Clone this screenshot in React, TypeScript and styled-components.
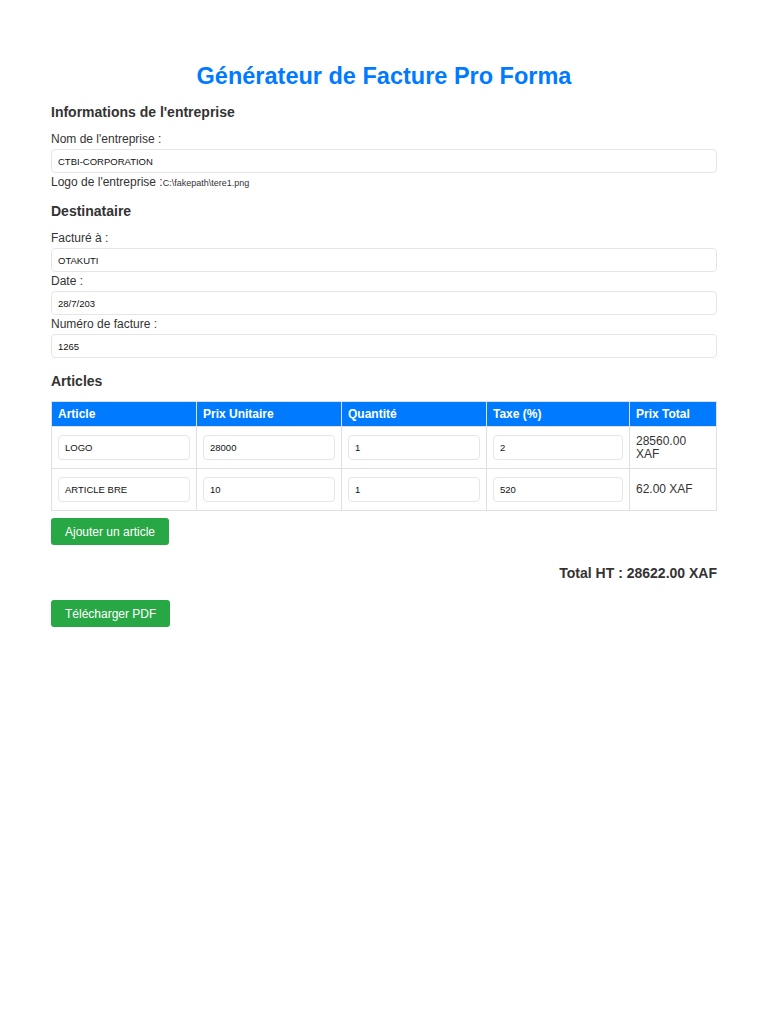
import React, { useState } from 'react'
import styled, { createGlobalStyle } from 'styled-components'

const GlobalStyle = createGlobalStyle`
    body {
        margin: 0;
        background: #fff;
        font-family: "Liberation Sans", Arial, sans-serif;
        color: #333;
    }
`

const Page = styled.div`
    width: 666px;
    margin: 0 auto;
    padding-top: 61px;
`

const Title = styled.h1`
    margin: 0 0 13px;
    text-align: center;
    color: #007bff;
    font-size: 23.5px;
    font-weight: bold;
    line-height: 30px;
`

const SectionTitle = styled.h3<{ $top?: number }>`
    margin: ${p => p.$top ?? 0}px 0 11px;
    font-size: 14px;
    font-weight: bold;
    color: #333;
    line-height: 17px;
`

const Section = styled.section`
    margin-bottom: 13px;
`

const Label = styled.label`
    display: block;
    font-size: 12px;
    line-height: 14px;
    color: #333;
    margin-bottom: 3px;
`

const FileName = styled.span`
    font-size: 9px;
`

const TextInput = styled.input`
    display: block;
    box-sizing: border-box;
    width: 100%;
    height: 24px;
    padding: 0 6px;
    margin-bottom: 2px;
    border: 1px solid #e6e6e6;
    border-radius: 4px;
    font-family: "Liberation Sans", Arial, sans-serif;
    font-size: 9.5px;
    color: #111;
    outline: none;
`

const Table = styled.table`
    width: 100%;
    table-layout: fixed;
    border-collapse: collapse;
    margin-top: 8px;
`

const Th = styled.th`
    background: #007bff;
    color: #fff;
    font-size: 12px;
    font-weight: bold;
    text-align: left;
    padding: 0 6px;
    height: 24px;
    border: 1px solid #e0e0e0;
`

const Td = styled.td`
    border: 1px solid #e0e0e0;
    padding: 0 6px;
    height: 41px;
    font-size: 12px;
    line-height: 13px;
    color: #333;
`

const CellInput = styled(TextInput)`
    height: 25px;
    margin: 0;
`

const Button = styled.button<{ $top?: number }>`
    display: block;
    margin-top: ${p => p.$top ?? 0}px;
    background: #28a745;
    color: #fff;
    border: none;
    border-radius: 3px;
    font-family: "Liberation Sans", Arial, sans-serif;
    font-size: 12px;
    height: 27px;
    padding: 0 14px;
    cursor: pointer;
`

const Total = styled.div`
    text-align: right;
    font-size: 14px;
    font-weight: bold;
    color: #333;
    line-height: 17px;
    margin: 20px 0 18px;
`

type Item = { name: string; price: string; qty: string; tax: string }

const initialItems: Item[] = [
    { name: 'LOGO', price: '28000', qty: '1', tax: '2' },
    { name: 'ARTICLE BRE', price: '10', qty: '1', tax: '520' },
]

const lineTotal = (it: Item) => {
    const base = Number(it.price) * Number(it.qty)
    return base + (base * Number(it.tax)) / 100
}

const App = () => {
    const [items, setItems] = useState<Item[]>(initialItems)

    const update = (i: number, key: keyof Item, value: string) => {
        setItems(items.map((it, idx) => (idx === i ? { ...it, [key]: value } : it)))
    }

    const total = items.reduce((sum, it) => sum + lineTotal(it), 0)

    return (
        <>
            <GlobalStyle />
            <Page>
                <Title>Générateur de Facture Pro Forma</Title>

                <Section>
                    <SectionTitle>Informations de l'entreprise</SectionTitle>
                    <Label>Nom de l'entreprise :</Label>
                    <TextInput defaultValue="CTBI-CORPORATION" />
                    <Label>
                        Logo de l'entreprise :<FileName>C:\fakepath\tere1.png</FileName>
                    </Label>
                </Section>

                <Section>
                    <SectionTitle>Destinataire</SectionTitle>
                    <Label>Facturé à :</Label>
                    <TextInput defaultValue="OTAKUTI" />
                    <Label>Date :</Label>
                    <TextInput defaultValue="28/7/203" />
                    <Label>Numéro de facture :</Label>
                    <TextInput defaultValue="1265" />
                </Section>

                {/* collapses with the section margin above */}
                <SectionTitle $top={15}>Articles</SectionTitle>
                <Table>
                    <colgroup>
                        <col style={{ width: 145 }} />
                        <col style={{ width: 145 }} />
                        <col style={{ width: 145 }} />
                        <col style={{ width: 143 }} />
                        <col />
                    </colgroup>
                    <thead>
                        <tr>
                            <Th>Article</Th>
                            <Th>Prix Unitaire</Th>
                            <Th>Quantité</Th>
                            <Th>Taxe (%)</Th>
                            <Th>Prix Total</Th>
                        </tr>
                    </thead>
                    <tbody>
                        {items.map((it, i) => (
                            <tr key={i}>
                                <Td><CellInput value={it.name} onChange={e => update(i, 'name', e.target.value)} /></Td>
                                <Td><CellInput value={it.price} onChange={e => update(i, 'price', e.target.value)} /></Td>
                                <Td><CellInput value={it.qty} onChange={e => update(i, 'qty', e.target.value)} /></Td>
                                <Td><CellInput value={it.tax} onChange={e => update(i, 'tax', e.target.value)} /></Td>
                                <Td>{lineTotal(it).toFixed(2)} XAF</Td>
                            </tr>
                        ))}
                    </tbody>
                </Table>

                <Button $top={7} onClick={() => setItems([...items, { name: '', price: '0', qty: '1', tax: '0' }])}>
                    Ajouter un article
                </Button>

                <Total>Total HT : {total.toFixed(2)} XAF</Total>

                <Button>Télécharger PDF</Button>
            </Page>
        </>
    )
}

export default App
